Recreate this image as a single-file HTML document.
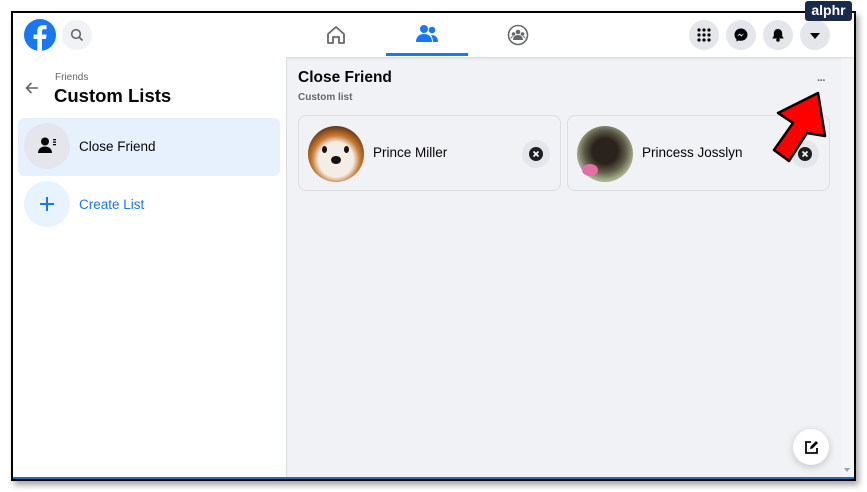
<!DOCTYPE html>
<html><head><style>
*{margin:0;padding:0;box-sizing:border-box}
body{width:867px;height:492px;background:#fff;position:relative;overflow:hidden;font-family:"Liberation Sans",Arial,sans-serif;color:#050505}
.frame{position:absolute;left:11px;top:11px;width:845px;height:470px;border:2px solid #000;box-shadow:3px 4px 6px rgba(0,0,0,.35);background:#f0f2f5;overflow:hidden}
.hdr{position:absolute;left:0;top:0;width:841px;height:44px;background:#fff;box-shadow:0 1px 2px rgba(0,0,0,.12)}
.side{position:absolute;left:0;top:44px;width:274px;height:420px;background:#fff;border-right:1px solid #dadde1}
.circ{position:absolute;border-radius:50%;background:#e4e6eb}
.abs{position:absolute}
.card{position:absolute;top:102px;width:263px;height:76px;background:#f0f2f5;border:1px solid #dadde1;border-radius:8px}
</style></head><body>
<div class="frame">
 <div class="abs" style="left:829px;top:44px;width:12px;height:420px;background:#f4f5f7"></div>
 <div class="hdr">
  <svg class="abs" style="left:11px;top:6px" width="32" height="32" viewBox="0 0 32 32"><circle cx="16" cy="16" r="16" fill="#1877f2"/><path d="M18 32V20h4l.6-4.5H18v-3c0-1.3.4-2.2 2.2-2.2h2.4v-4c-.4-.1-1.8-.2-3.5-.2-3.5 0-5.8 2.1-5.8 6v3.4H9.5V20h3.8v12z" fill="#fff"/></svg>
  <div class="circ" style="left:49px;top:7px;width:30px;height:30px;background:#f0f2f5"></div>
  <svg class="abs" style="left:57px;top:15px" width="14" height="14" viewBox="0 0 14 14"><circle cx="6" cy="6" r="4.3" fill="none" stroke="#65676b" stroke-width="1.6"/><path d="M9 9l3.5 3.5" stroke="#65676b" stroke-width="1.6"/></svg>
  <svg class="abs" style="left:313px;top:12px" width="20" height="20" viewBox="0 0 20 20"><path d="M2 9L10 2l8 7v9h-5v-6H7v6H2z" fill="none" stroke="#65676b" stroke-width="1.8" stroke-linejoin="round"/></svg>
  <svg class="abs" style="left:403px;top:11px" width="22" height="20" viewBox="0 0 22 20"><circle cx="8" cy="5" r="4" fill="#1877f2"/><circle cx="16" cy="6" r="3.3" fill="#1877f2"/><path d="M0 18c0-5 3-8 8-8s8 3 8 8z" fill="#1877f2"/><path d="M15 11c4 0 7 2 7 7h-5c0-3-1-5-2-7z" fill="#1877f2"/></svg>
  <div class="abs" style="left:373px;top:40px;width:82px;height:3px;background:#1877f2"></div>
  <svg class="abs" style="left:494px;top:11px" width="22" height="22" viewBox="0 0 22 22"><circle cx="11" cy="11" r="9.5" fill="none" stroke="#65676b" stroke-width="1.6"/><circle cx="11" cy="8" r="2.3" fill="#65676b"/><circle cx="6.5" cy="10" r="1.8" fill="#65676b"/><circle cx="15.5" cy="10" r="1.8" fill="#65676b"/><path d="M6 16c0-3 2-5 5-5s5 2 5 5z M3.5 15c0-2 1-3 3-3M18.5 15c0-2-1-3-3-3" fill="#65676b"/></svg>
  <div class="circ" style="left:676px;top:7px;width:30px;height:30px"></div>
  <svg class="abs" style="left:684px;top:15px" width="14" height="14" viewBox="0 0 14 14" fill="#050505"><circle cx="2" cy="2" r="1.6"/><circle cx="7" cy="2" r="1.6"/><circle cx="12" cy="2" r="1.6"/><circle cx="2" cy="7" r="1.6"/><circle cx="7" cy="7" r="1.6"/><circle cx="12" cy="7" r="1.6"/><circle cx="2" cy="12" r="1.6"/><circle cx="7" cy="12" r="1.6"/><circle cx="12" cy="12" r="1.6"/></svg>
  <div class="circ" style="left:713px;top:7px;width:30px;height:30px"></div>
  <svg class="abs" style="left:721px;top:15px" width="14" height="14" viewBox="0 0 14 14"><path d="M7 .5C3.3.5.5 3.2.5 6.8c0 1.9.8 3.5 2 4.6v2.2l2-1.1c.8.2 1.6.3 2.5.3 3.7 0 6.5-2.7 6.5-6S10.7.5 7 .5z" fill="#050505"/><path d="M3 8.5l2.5-3 1.8 1.6 2.7-1.6-2.5 3-1.8-1.6z" fill="#fff"/></svg>
  <div class="circ" style="left:750px;top:7px;width:30px;height:30px"></div>
  <svg class="abs" style="left:758px;top:15px" width="14" height="14" viewBox="0 0 14 14"><path d="M7 1c2.7 0 4.2 2 4.2 4.5v2.5l1.6 2.5H1.2L2.8 8V5.5C2.8 3 4.3 1 7 1z" fill="#050505"/><circle cx="7" cy="12" r="1.8" fill="#050505"/></svg>
  <div class="circ" style="left:787px;top:7px;width:30px;height:30px"></div>
  <svg class="abs" style="left:797px;top:20px" width="10" height="6" viewBox="0 0 10 6"><path d="M0 0h10L5 6z" fill="#050505"/></svg>
 </div>
 <div class="side">
  <svg class="abs" style="left:12px;top:25px" width="14" height="12" viewBox="0 0 14 12"><path d="M13 6H2M6.5 1L1.5 6l5 5" fill="none" stroke="#65676b" stroke-width="1.6"/></svg>
  <div class="abs" style="left:42px;top:15px;font-size:10px;color:#65676b">Friends</div>
  <div class="abs" style="left:41px;top:28px;font-size:18.5px;font-weight:bold">Custom Lists</div>
  <div class="abs" style="left:5px;top:61px;width:262px;height:58px;background:#e7f0fd;border-radius:6px"></div>
  <div class="circ" style="left:11px;top:66px;width:46px;height:46px"></div>
  <svg class="abs" style="left:25px;top:80px" width="19" height="17" viewBox="0 0 19 17" fill="#050505"><circle cx="7" cy="4.5" r="4"/><path d="M0 16c0-4 3-6.5 7-6.5s7 2.5 7 6.5z"/><rect x="15" y="2" width="3" height="1.3"/><rect x="15" y="4.5" width="3" height="1.3"/><rect x="15" y="7" width="3" height="1.3"/></svg>
  <div class="abs" style="left:66px;top:82px;font-size:13.5px">Close Friend</div>
  <div class="circ" style="left:11px;top:124px;width:46px;height:46px;background:#e7f3ff"></div>
  <svg class="abs" style="left:26px;top:139px" width="16" height="16" viewBox="0 0 16 16"><path d="M8 1v14M1 8h14" stroke="#1877f2" stroke-width="2"/></svg>
  <div class="abs" style="left:66px;top:140px;font-size:13.5px;color:#1877f2">Create List</div>
 </div>
 <div class="abs" style="left:285px;top:56px;font-size:15.5px;font-weight:bold">Close Friend</div>
 <div class="abs" style="left:285px;top:79px;font-size:10px;font-weight:bold;color:#65676b">Custom list</div>
 <div class="abs" style="left:804px;top:62px;font-size:11px;font-weight:bold;color:#65676b;letter-spacing:-1px">···</div>
 <div class="card" style="left:285px">
  <div class="abs" style="left:9px;top:10px;width:56px;height:56px;border-radius:50%;background:radial-gradient(circle at 50% 60%,#f4ede6 0 40%,#c87a30 55%,#6b3a1a 75%);"></div>
  <div class="abs" style="left:23px;top:30px;width:5px;height:7px;border-radius:50%;background:#111"></div>
  <div class="abs" style="left:45px;top:30px;width:5px;height:7px;border-radius:50%;background:#111"></div>
  <div class="abs" style="left:32px;top:40px;width:10px;height:8px;border-radius:50%;background:#111"></div>
  <div class="abs" style="left:74px;top:29px;font-size:13.5px">Prince Miller</div>
  <div class="circ" style="left:223px;top:24px;width:28px;height:28px"></div>
  <svg class="abs" style="left:230px;top:31px" width="14" height="14" viewBox="0 0 14 14"><circle cx="7" cy="7" r="7" fill="#1c1e21"/><path d="M4.5 4.5l5 5M9.5 4.5l-5 5" stroke="#fff" stroke-width="1.6"/></svg>
 </div>
 <div class="card" style="left:554px">
  <div class="abs" style="left:9px;top:10px;width:56px;height:56px;border-radius:50%;background:radial-gradient(circle at 50% 45%,#2a221c 0 30%,#5e5a48 50%,#a9b08e 70%);"></div>
  <div class="abs" style="left:14px;top:48px;width:16px;height:12px;border-radius:50%;background:#e270a5"></div>
  <div class="abs" style="left:74px;top:29px;font-size:13.5px">Princess Josslyn</div>
  <div class="circ" style="left:223px;top:24px;width:28px;height:28px"></div>
  <svg class="abs" style="left:230px;top:31px" width="14" height="14" viewBox="0 0 14 14"><circle cx="7" cy="7" r="7" fill="#1c1e21"/><path d="M4.5 4.5l5 5M9.5 4.5l-5 5" stroke="#fff" stroke-width="1.6"/></svg>
 </div>
 <div class="circ" style="left:780px;top:416px;width:36px;height:36px;background:#fff;box-shadow:0 2px 8px rgba(0,0,0,.2)"></div>
 <svg class="abs" style="left:791px;top:427px" width="15" height="15" viewBox="0 0 15 15"><path d="M7 2H2v11h11V8" fill="none" stroke="#050505" stroke-width="1.8"/><path d="M6 9l.5-2.5L12 1l2 2-5.5 5.5z" fill="#050505"/></svg>
 <div class="abs" style="left:831px;top:455px;width:0;height:0;border-left:3px solid transparent;border-right:3px solid transparent;border-top:4px solid #a0a0a0"></div>
 <div class="abs" style="left:0;top:464px;width:841px;height:2px;background:#1f6fb8"></div>
</div>
<svg class="abs" style="left:0;top:0" width="867" height="492" viewBox="0 0 867 492"><path d="M818 93L778 113L793 123L774 150L789 161L807 133L825 136Z" fill="#f00" stroke="#000" stroke-width="2.5" stroke-linejoin="round"/></svg>
<div class="abs" style="left:805px;top:1px;width:47px;height:20px;background:#1a2a4a;border-radius:3px;color:#fff;font-size:14px;font-weight:bold;text-align:center;line-height:19px">alphr</div>
</body></html>
